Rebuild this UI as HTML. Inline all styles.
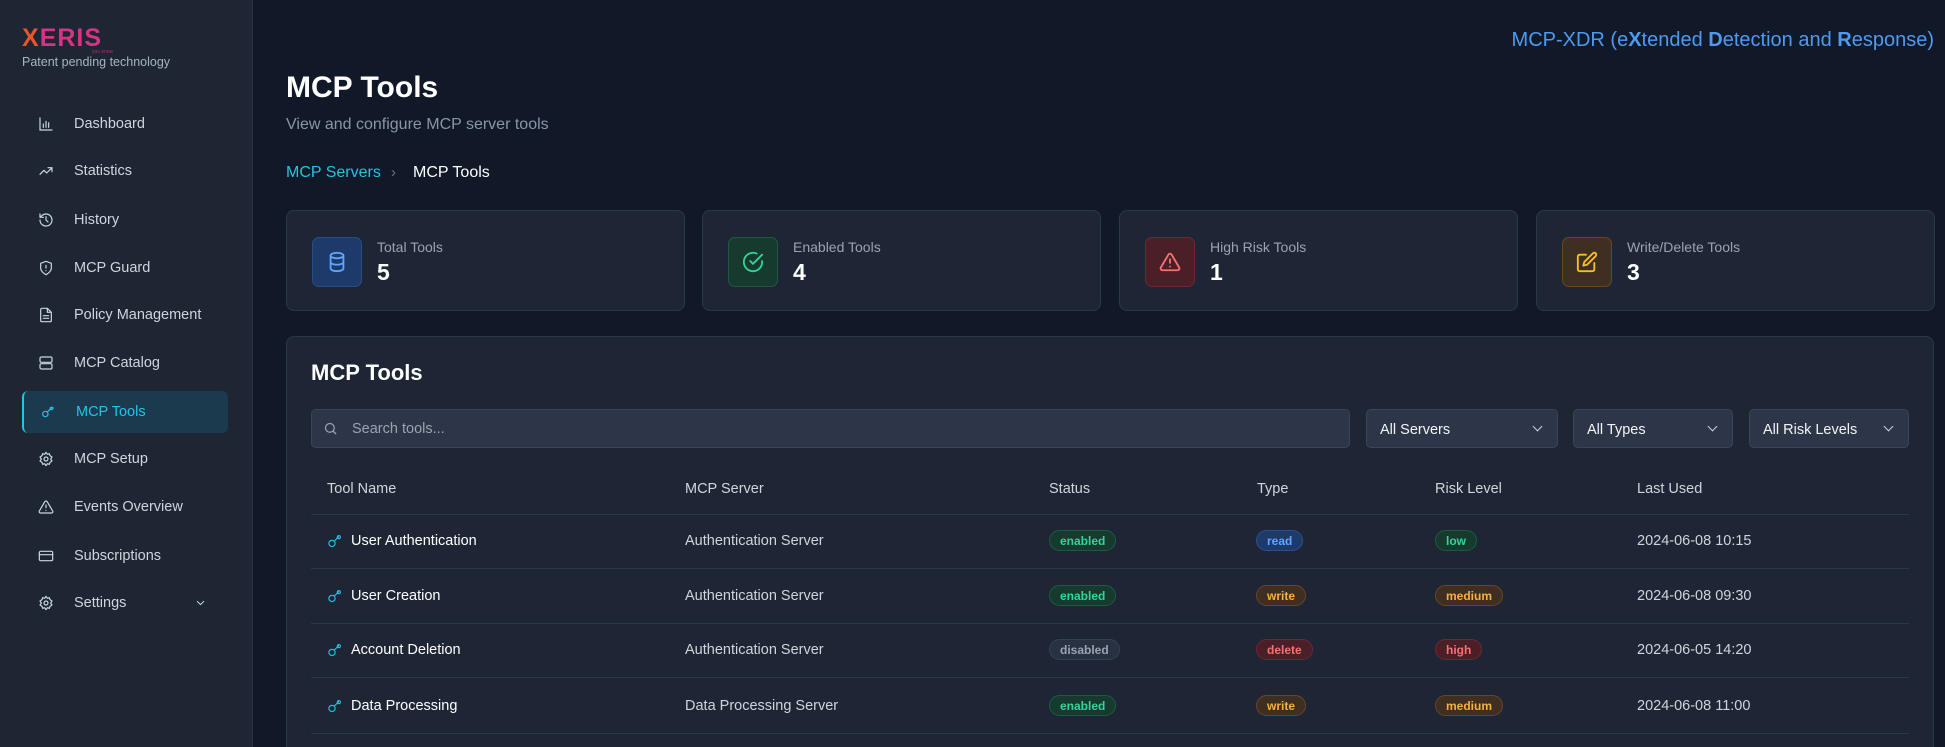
<!DOCTYPE html>
<html><head><meta charset="utf-8"><style>
*{box-sizing:border-box;margin:0;padding:0}
html{overflow:hidden;height:747px}
body{width:1945px;height:747px;overflow:hidden;background:#111827;font-family:"Liberation Sans",Arial,sans-serif;color:#e5e7eb;position:relative}
.a{position:absolute}
#side{left:0;top:0;width:253px;height:747px;background:#1e2533;border-right:1px solid #2a3242}
.nav{position:absolute;left:22px;width:206px;height:42px;display:flex;align-items:center;font-size:14.5px;color:#d1d5db}
.nav svg{position:absolute;left:16px;width:16px;height:16px;fill:none;stroke:#cbd5e1;stroke-width:1.8;stroke-linecap:round;stroke-linejoin:round}
.nav span{position:absolute;left:52px}
.nav.act{background:#1c3a4d;border-left:2px solid #22c5e5;border-radius:6px;color:#22c5e5}
.nav.act svg{stroke:#22c5e5}
.card{position:absolute;top:210px;height:101px;width:399px;background:#1e2534;border:1px solid #2e3747;border-radius:8px}
.ib{position:absolute;left:25px;top:26px;width:50px;height:50px;border-radius:7px;display:flex;align-items:center;justify-content:center}
.ib svg{width:22px;height:22px;fill:none;stroke-width:2;stroke-linecap:round;stroke-linejoin:round}
.cl{position:absolute;left:90px;top:28px;font-size:14px;color:#9ca3af}
.cv{position:absolute;left:90px;top:48px;font-size:23px;font-weight:bold;color:#fff}
.sel{position:absolute;top:409px;height:39px;background:#2c3648;border:1px solid #3b4558;border-radius:5px;font-size:14.5px;color:#f3f4f6;padding:12px 0 0 13px}
.sel:after{content:"";position:absolute;right:16px;top:13px;width:6px;height:6px;border-right:1.5px solid #cbd5e1;border-bottom:1.5px solid #cbd5e1;transform:rotate(45deg)}
.th{position:absolute;top:481px;font-size:14.5px;color:#d1d5db}
.ln{position:absolute;left:311px;width:1598px;height:1px;background:#2e3747}
.td{position:absolute;font-size:14.5px;color:#d1d5db}
.nm{color:#fff}
.bd{position:absolute;height:21px;border-radius:11px;font-size:12px;font-weight:bold;padding:3px 10px 0;border:1px solid}
.g{background:#173a2e;color:#34d399;border-color:#1f5a40}
.b{background:#1e3a6b;color:#60a5fa;border-color:#2b4f8c}
.o{background:#3f2f22;color:#f5b041;border-color:#6b4424}
.r{background:#4a1f28;color:#f87171;border-color:#6e2733}
.x{background:#283142;color:#9ca3af;border-color:#364052}
.key{position:absolute;width:15px;height:15px;fill:none;stroke:#22c5e5;stroke-width:1.8}
</style></head><body>
<div id="side" class="a">
 <div class="a" style="left:22px;top:24px;font-size:25px;font-weight:bold;letter-spacing:1px;color:#d63384"><span style="color:#e8542e">X</span>ERIS</div>
 <div class="a" style="left:92px;top:49px;font-size:5px;color:#b02a78">you know</div>
 <div class="a" style="left:22px;top:55px;font-size:12.5px;color:#aab3c2">Patent pending technology</div>
 <div class="nav" style="top:103px"><svg viewBox="0 0 24 24"><path d="M3 3v18h18M8 17v-5M12 17V8M16 17v-7"/></svg><span>Dashboard</span></div>
 <div class="nav" style="top:150px"><svg viewBox="0 0 24 24"><path d="M3 17l6-6 4 4 8-8M15 7h6v6"/></svg><span>Statistics</span></div>
 <div class="nav" style="top:199px"><svg viewBox="0 0 24 24"><path d="M3 12a9 9 0 1 0 3-6.7L3 8M3 3v5h5M12 7v5l3 3"/></svg><span>History</span></div>
 <div class="nav" style="top:247px"><svg viewBox="0 0 24 24"><path d="M12 22s8-4 8-10V5l-8-3-8 3v7c0 6 8 10 8 10zM12 8v4M12 16h0"/></svg><span>MCP Guard</span></div>
 <div class="nav" style="top:294px"><svg viewBox="0 0 24 24"><path d="M14 2H6a2 2 0 0 0-2 2v16a2 2 0 0 0 2 2h12a2 2 0 0 0 2-2V8zM14 2v6h6M8 13h8M8 17h8"/></svg><span>Policy Management</span></div>
 <div class="nav" style="top:342px"><svg viewBox="0 0 24 24"><rect x="3" y="3" width="18" height="8" rx="2"/><rect x="3" y="13" width="18" height="8" rx="2"/></svg><span>MCP Catalog</span></div>
 <div class="nav act" style="top:391px"><svg viewBox="0 0 24 24"><circle cx="8" cy="15" r="4"/><path d="M11 12l7-7M16 5a2 2 0 1 0 3 0"/></svg><span style="left:52px">MCP Tools</span></div>
 <div class="nav" style="top:438px"><svg viewBox="0 0 24 24"><circle cx="12" cy="12" r="3"/><path d="M12 2l2 3 3-1 1 3 3 2-2 3 2 3-3 2-1 3-3-1-2 3-2-3-3 1-1-3-3-2 2-3-2-3 3-2 1-3 3 1z"/></svg><span>MCP Setup</span></div>
 <div class="nav" style="top:486px"><svg viewBox="0 0 24 24"><path d="M10.3 3.9L2 18a2 2 0 0 0 1.7 3h16.6a2 2 0 0 0 1.7-3L13.7 3.9a2 2 0 0 0-3.4 0zM12 9v4M12 17h0"/></svg><span>Events Overview</span></div>
 <div class="nav" style="top:535px"><svg viewBox="0 0 24 24"><rect x="2" y="5" width="20" height="14" rx="2"/><path d="M2 10h20"/></svg><span>Subscriptions</span></div>
 <div class="nav" style="top:582px"><svg viewBox="0 0 24 24"><circle cx="12" cy="12" r="3"/><path d="M12 2l2 3 3-1 1 3 3 2-2 3 2 3-3 2-1 3-3-1-2 3-2-3-3 1-1-3-3-2 2-3-2-3 3-2 1-3 3 1z"/></svg><span>Settings</span><svg viewBox="0 0 24 24" style="left:172px;width:13px"><path d="M6 9l6 6 6-6"/></svg></div>
</div>

<div class="a" style="right:11px;top:29px;font-size:20px;color:#4e9af1">MCP-XDR (e<b>X</b>tended <b>D</b>etection and <b>R</b>esponse)</div>
<div class="a" style="left:286px;top:71px;font-size:30px;font-weight:bold;color:#fff">MCP Tools</div>
<div class="a" style="left:286px;top:116px;font-size:16px;color:#8b95a7">View and configure MCP server tools</div>
<div class="a" style="left:286px;top:164px;font-size:16px;color:#22c5e5">MCP Servers</div>
<div class="a" style="left:391px;top:164px;font-size:15px;color:#6b7280">&#8250;</div>
<div class="a" style="left:413px;top:164px;font-size:16px;color:#fff">MCP Tools</div>

<div class="card" style="left:286px"><div class="ib" style="background:#1e3a6b;border:1px solid #284d85"><svg viewBox="0 0 24 24" stroke="#60a5fa"><ellipse cx="12" cy="5" rx="7" ry="3"/><path d="M5 5v14c0 1.7 3 3 7 3s7-1.3 7-3V5M5 12c0 1.7 3 3 7 3s7-1.3 7-3"/></svg></div><div class="cl">Total Tools</div><div class="cv">5</div></div>
<div class="card" style="left:702px"><div class="ib" style="background:#173a2e;border:1px solid #1f5a40"><svg viewBox="0 0 24 24" stroke="#34d399"><path d="M22 11v1a10 10 0 1 1-6-9.2"/><path d="M9 11l3 3L22 4"/></svg></div><div class="cl">Enabled Tools</div><div class="cv">4</div></div>
<div class="card" style="left:1119px"><div class="ib" style="background:#4a1f28;border:1px solid #6e2733"><svg viewBox="0 0 24 24" stroke="#f87171"><path d="M10.3 3.9L2 18a2 2 0 0 0 1.7 3h16.6a2 2 0 0 0 1.7-3L13.7 3.9a2 2 0 0 0-3.4 0zM12 9v4M12 17h0"/></svg></div><div class="cl">High Risk Tools</div><div class="cv">1</div></div>
<div class="card" style="left:1536px"><div class="ib" style="background:#3f2f22;border:1px solid #6b4424"><svg viewBox="0 0 24 24" stroke="#fbbf24"><path d="M11 4H4a2 2 0 0 0-2 2v14a2 2 0 0 0 2 2h14a2 2 0 0 0 2-2v-7"/><path d="M18.5 2.5a2.1 2.1 0 0 1 3 3L12 15l-4 1 1-4z"/></svg></div><div class="cl">Write/Delete Tools</div><div class="cv">3</div></div>

<div class="a" style="left:286px;top:336px;width:1648px;height:420px;background:#1e2534;border:1px solid #2e3747;border-radius:8px"></div>
<div class="a" style="left:311px;top:360px;font-size:22px;font-weight:bold;color:#fff">MCP Tools</div>
<div class="a" style="left:311px;top:409px;width:1039px;height:39px;background:#2c3648;border:1px solid #3b4558;border-radius:5px"></div>
<svg class="a" style="left:323px;top:421px" width="15" height="15" viewBox="0 0 24 24" fill="none" stroke="#9ca3af" stroke-width="2"><circle cx="11" cy="11" r="7"/><path d="M21 21l-5-5"/></svg>
<div class="a" style="left:352px;top:421px;font-size:14.5px;color:#9ca3af">Search tools...</div>
<div class="sel" style="left:1366px;width:192px">All Servers</div>
<div class="sel" style="left:1573px;width:160px">All Types</div>
<div class="sel" style="left:1749px;width:160px">All Risk Levels</div>

<div class="th" style="left:327px">Tool Name</div><div class="th" style="left:685px">MCP Server</div><div class="th" style="left:1049px">Status</div><div class="th" style="left:1257px">Type</div><div class="th" style="left:1435px">Risk Level</div><div class="th" style="left:1637px">Last Used</div>
<div class="ln" style="top:514px"></div><div class="ln" style="top:568px"></div><div class="ln" style="top:623px"></div><div class="ln" style="top:677px"></div><div class="ln" style="top:733px"></div>

<svg class="key" style="left:327px;top:534px" viewBox="0 0 24 24"><circle cx="8" cy="15" r="5"/><path d="M12 11l7-7"/><circle cx="19" cy="5" r="2.5"/></svg>
<div class="td nm" style="left:351px;top:533px">User Authentication</div><div class="td" style="left:685px;top:533px">Authentication Server</div>
<div class="bd g" style="left:1049px;top:530px">enabled</div><div class="bd b" style="left:1256px;top:530px">read</div><div class="bd g" style="left:1435px;top:530px">low</div><div class="td" style="left:1637px;top:533px">2024-06-08 10:15</div>

<svg class="key" style="left:327px;top:589px" viewBox="0 0 24 24"><circle cx="8" cy="15" r="5"/><path d="M12 11l7-7"/><circle cx="19" cy="5" r="2.5"/></svg>
<div class="td nm" style="left:351px;top:588px">User Creation</div><div class="td" style="left:685px;top:588px">Authentication Server</div>
<div class="bd g" style="left:1049px;top:585px">enabled</div><div class="bd o" style="left:1256px;top:585px">write</div><div class="bd o" style="left:1435px;top:585px">medium</div><div class="td" style="left:1637px;top:588px">2024-06-08 09:30</div>

<svg class="key" style="left:327px;top:643px" viewBox="0 0 24 24"><circle cx="8" cy="15" r="5"/><path d="M12 11l7-7"/><circle cx="19" cy="5" r="2.5"/></svg>
<div class="td nm" style="left:351px;top:642px">Account Deletion</div><div class="td" style="left:685px;top:642px">Authentication Server</div>
<div class="bd x" style="left:1049px;top:639px">disabled</div><div class="bd r" style="left:1256px;top:639px">delete</div><div class="bd r" style="left:1435px;top:639px">high</div><div class="td" style="left:1637px;top:642px">2024-06-05 14:20</div>

<svg class="key" style="left:327px;top:699px" viewBox="0 0 24 24"><circle cx="8" cy="15" r="5"/><path d="M12 11l7-7"/><circle cx="19" cy="5" r="2.5"/></svg>
<div class="td nm" style="left:351px;top:698px">Data Processing</div><div class="td" style="left:685px;top:698px">Data Processing Server</div>
<div class="bd g" style="left:1049px;top:695px">enabled</div><div class="bd o" style="left:1256px;top:695px">write</div><div class="bd o" style="left:1435px;top:695px">medium</div><div class="td" style="left:1637px;top:698px">2024-06-08 11:00</div>
</body></html>
